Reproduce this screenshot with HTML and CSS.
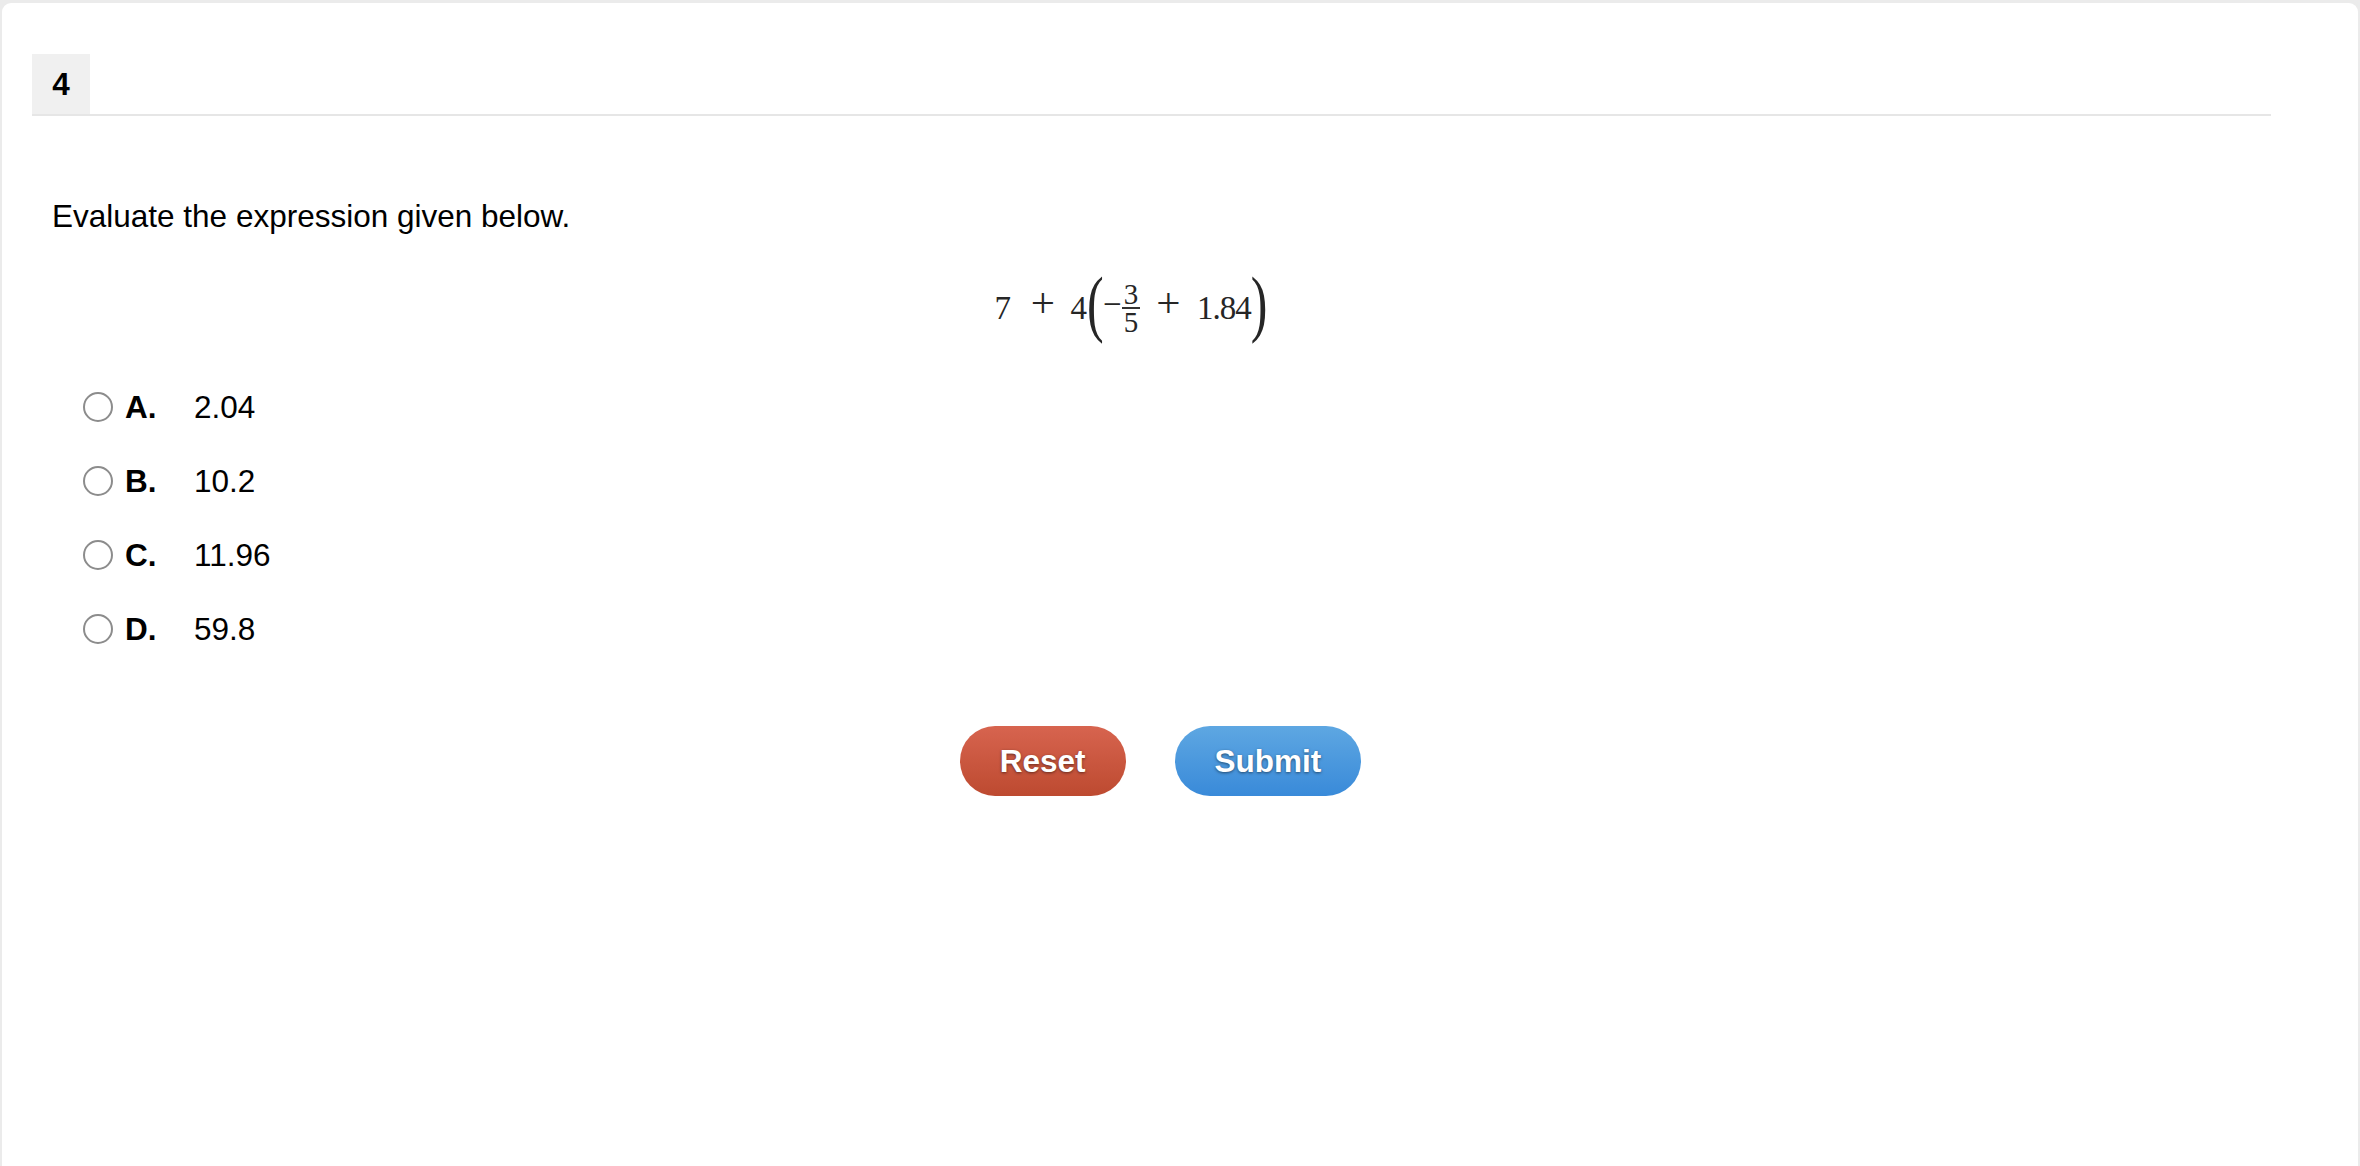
FILE: index.html
```html
<!DOCTYPE html>
<html lang="en">
<head>
<meta charset="utf-8">
<title>Question 4</title>
<link rel="stylesheet" href="styles.css">
</head>
<body>
<div class="frame">
  <div class="card">
    <div class="qhead"><div class="qnum">4</div></div>
    <div class="question">
      <p class="prompt">Evaluate the expression given below.</p>
      <div class="math-row">
        <div class="math">
          <span class="m-n m-7">7</span>
          <span class="m-op m-op1">+</span>
          <span class="m-n m-4">4</span>
          <span class="m-paren m-lp">(</span>
          <span class="m-minus">&minus;</span>
          <span class="frac"><span class="f-n">3</span><span class="bar"></span><span class="f-d">5</span></span>
          <span class="m-op m-op2">+</span>
          <span class="m-n m-dec">1.84</span>
          <span class="m-paren m-rp">)</span>
        </div>
      </div>
      <ul class="choices">
        <li class="choice"><span class="radio"></span><span class="letter">A.</span><span class="value">2.04</span></li>
        <li class="choice"><span class="radio"></span><span class="letter">B.</span><span class="value">10.2</span></li>
        <li class="choice"><span class="radio"></span><span class="letter">C.</span><span class="value">11.96</span></li>
        <li class="choice"><span class="radio"></span><span class="letter">D.</span><span class="value">59.8</span></li>
      </ul>
      <div class="actions">
        <button class="btn btn-reset">Reset</button>
        <button class="btn btn-submit">Submit</button>
      </div>
    </div>
  </div>
</div>
</body>
</html>
```
FILE: styles.css
```css
html, body {
  margin: 0;
  height: 100%;
}
body {
  background: #ebebeb;
  font-family: "Liberation Sans", Arial, sans-serif;
  color: #000;
  overflow: hidden;
}
.frame {
  height: 100%;
  box-sizing: border-box;
  padding: 3px 2px 0 2px;
}
.card {
  height: 100%;
  box-sizing: border-box;
  background: #fff;
  border-radius: 9px 9px 0 0;
  padding: 51px 87px 0 30px;
}
.qhead {
  display: flex;
  border-bottom: 2px solid #e6e6e6;
}
.qnum {
  width: 58px;
  height: 60px;
  background: #f0f0f0;
  display: flex;
  align-items: center;
  justify-content: center;
  font-weight: bold;
  font-size: 31.5px;
}
.question {
  padding: 0 20px;
}
.prompt {
  margin: 82px 0 0;
  font-size: 31.5px;
  line-height: 36px;
}
.math-row {
  margin-top: 34px;
  height: 80px;
  display: flex;
  justify-content: center;
  align-items: center;
}
.math {
  display: flex;
  align-items: center;
  padding-right: 44px;
  font-family: "Liberation Serif", "Times New Roman", serif;
  font-size: 33px;
  line-height: 32px;
  color: #262626;
}
.m-n {
  line-height: 32px;
}
.m-7 {
  width: 16px;
}
.m-op {
  width: 31px;
  text-align: center;
  font-size: 43px;
  line-height: 32px;
  padding-bottom: 11px;
}
.m-op1 {
  margin-left: 17px;
}
.m-4 {
  margin-left: 12px;
}
.m-paren {
  font-size: 50px;
  line-height: 50px;
  width: 16px;
  text-align: center;
  padding-bottom: 8px;
  transform-origin: 50% 29px;
  transform: scaleY(1.5);
}
.m-minus {
  width: 18px;
  text-align: center;
  padding-bottom: 8px;
}
.frac {
  display: flex;
  flex-direction: column;
  align-items: center;
  width: 20px;
  font-size: 29px;
}
.frac .f-n, .frac .f-d {
  line-height: 22px;
}
.frac .bar {
  width: 18px;
  height: 1.5px;
  background: #333;
  margin: 2px 0;
}
.m-op2 {
  margin-left: 12px;
}
.m-dec {
  margin-left: 13px;
  letter-spacing: -1px;
}
.m-rp {
  width: 14px;
}
.choices {
  list-style: none;
  margin: 41px 0 0;
  padding: 0 0 0 31px;
  display: flex;
  flex-direction: column;
  gap: 38px;
}
.choice {
  display: flex;
  align-items: center;
  font-size: 31.5px;
  line-height: 36px;
}
.radio {
  width: 30px;
  height: 30px;
  box-sizing: border-box;
  border: 2.5px solid #8c8c8c;
  border-radius: 50%;
  margin-right: 12px;
  flex: none;
}
.letter {
  font-weight: bold;
  width: 69px;
}
.actions {
  margin-top: 79px;
  display: flex;
  justify-content: center;
  gap: 49px;
  padding-left: 18px;
}
.btn {
  height: 70px;
  padding: 0 40px;
  border-radius: 35px;
  border: none;
  font-family: "Liberation Sans", Arial, sans-serif;
  font-weight: bold;
  font-size: 31.5px;
  color: #fff;
  text-shadow: 0 1px 3px rgba(0, 0, 0, 0.5);
  cursor: pointer;
}
.btn-reset {
  background: linear-gradient(#d7644f, #bd4a30);
}
.btn-submit {
  background: linear-gradient(#5ea7e2, #398ad9);
}
```
